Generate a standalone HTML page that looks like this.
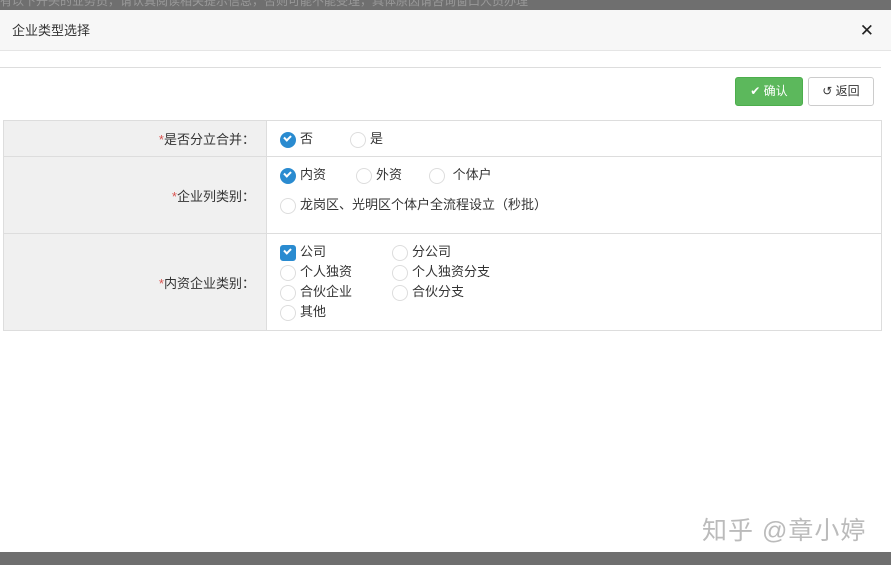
<!DOCTYPE html>
<html><head><meta charset="utf-8"><style>
*{box-sizing:border-box;margin:0;padding:0}
body{width:891px;height:565px;overflow:hidden;background:#6f6f6f;font-family:"Liberation Sans","Noto Sans CJK SC",sans-serif;font-size:13px;color:#333;position:relative}
.top{position:absolute;left:0;top:0;width:891px;height:10px;color:#999;font-size:12px;line-height:2px;white-space:nowrap;overflow:hidden}
.modal{position:absolute;left:0;top:10px;width:891px;height:542px;background:#fff}
.hd{height:41px;background:#f7f7f7;border-bottom:1px solid #e5e5e5;padding:0 12px;line-height:41px;font-size:13px}
.x{position:absolute;right:17px;top:12px;font-size:17px;line-height:18px;color:#222;font-weight:300}
.line{position:absolute;left:0;top:57px;width:881px;border-top:1px solid #ddd}
.btn{position:absolute;top:67px;height:29px;border-radius:3px;font-size:12px;line-height:27px;text-align:center}
.ok{left:735px;width:68px;background:#5cb85c;color:#fff;border:1px solid #4cae4c}
.back{left:808px;width:66px;background:#fff;border:1px solid #ccc;color:#333}
table{position:absolute;left:3px;top:110px;width:879px;border-collapse:collapse}
td{border:1px solid #ddd;vertical-align:top}
td.l{width:263px;background:#f0f0f0;text-align:right;padding-right:11px;vertical-align:middle}
.r{color:#d9534f}
.rd{display:inline-block;position:relative;padding-left:20px;height:20px;line-height:20px}
.rd:before{content:"";position:absolute;left:0;top:3px;width:14px;height:14px;border-radius:50%;border:1px solid #ddd;background:#fff}
.rd.on:before{background:#2a8bd0;border-color:#2a8bd0}
.rd.on:after{content:"";position:absolute;left:4px;top:6px;width:5px;height:3px;border-left:2px solid #fff;border-bottom:2px solid #fff;transform:rotate(-45deg)}
.sq.on:before{border-radius:3px}
</style></head><body>
<div class="top">有以下开头的业务员，请认真阅读相关提示信息，否则可能不能受理，具体原因请咨询窗口人员办理</div>
<div class="modal">
<div class="hd">企业类型选择</div>
<div class="x">✕</div>
<div class="line"></div>
<div class="btn ok">✔ 确认</div>
<div class="btn back">↺ 返回</div>
<table>
<tr style="height:36px"><td class="l"><span class="r">*</span>是否分立合并：</td><td style="padding:8px 0 0 13px"><span class="rd on" style="width:70px">否</span><span class="rd">是</span></td></tr>
<tr style="height:77px"><td class="l"><span class="r">*</span>企业列类别：</td><td style="padding:8px 0 0 13px"><span class="rd on" style="width:76px">内资</span><span class="rd" style="width:73px">外资</span><span class="rd">&nbsp;个体户</span><br><span class="rd" style="margin-top:10px">龙岗区、光明区个体户全流程设立（秒批）</span></td></tr>
<tr style="height:97px"><td class="l"><span class="r">*</span>内资企业类别：</td><td style="padding:8px 0 0 13px;line-height:20px">
<span class="rd on sq" style="width:112px">公司</span><span class="rd">分公司</span><br>
<span class="rd" style="width:112px">个人独资</span><span class="rd">个人独资分支</span><br>
<span class="rd" style="width:112px">合伙企业</span><span class="rd">合伙分支</span><br>
<span class="rd">其他</span></td></tr>
</table>
<div style="position:absolute;left:702px;top:501px;font-size:25px;color:#bbb;letter-spacing:1px">知乎 @章小婷</div>
</div>
</body></html>
